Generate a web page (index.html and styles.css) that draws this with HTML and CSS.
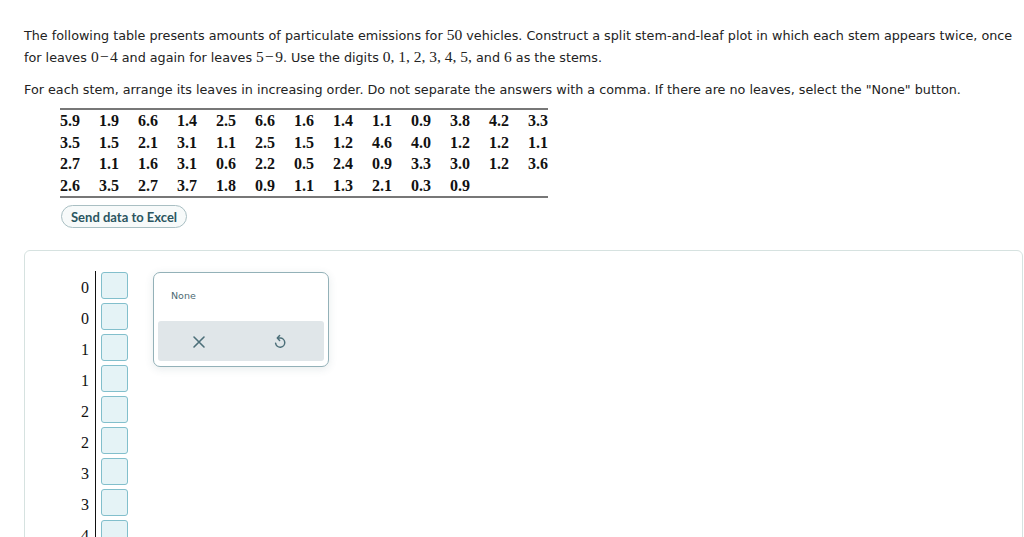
FILE: index.html
```html
<!DOCTYPE html>
<html>
<head>
<meta charset="utf-8">
<link rel="stylesheet" href="styles.css">
</head>
<body>
<div class="page">
  <p class="text">The following table presents amounts of particulate emissions for <span class="m">50</span> vehicles. Construct a split stem-and-leaf plot in which each stem appears twice, once for leaves <span class="m">0&#8202;&minus;&#8202;4</span> and again for leaves <span class="m">5&#8202;&minus;&#8202;9</span>. Use the digits <span class="m">0, 1, 2, 3, 4, 5,</span> and <span class="m">6</span> as the stems.</p>
  <p class="text second">For each stem, arrange its leaves in increasing order. Do not separate the answers with a comma. If there are no leaves, select the "None" button.</p>

  <table class="data">
    <tr><td>5.9</td><td>1.9</td><td>6.6</td><td>1.4</td><td>2.5</td><td>6.6</td><td>1.6</td><td>1.4</td><td>1.1</td><td>0.9</td><td>3.8</td><td>4.2</td><td>3.3</td></tr>
    <tr><td>3.5</td><td>1.5</td><td>2.1</td><td>3.1</td><td>1.1</td><td>2.5</td><td>1.5</td><td>1.2</td><td>4.6</td><td>4.0</td><td>1.2</td><td>1.2</td><td>1.1</td></tr>
    <tr><td>2.7</td><td>1.1</td><td>1.6</td><td>3.1</td><td>0.6</td><td>2.2</td><td>0.5</td><td>2.4</td><td>0.9</td><td>3.3</td><td>3.0</td><td>1.2</td><td>3.6</td></tr>
    <tr><td>2.6</td><td>3.5</td><td>2.7</td><td>3.7</td><td>1.8</td><td>0.9</td><td>1.1</td><td>1.3</td><td>2.1</td><td>0.3</td><td>0.9</td><td></td><td></td></tr>
  </table>

  <button class="excel">Send data to Excel</button>

  <div class="panel">
    <div class="plot">
      <div class="row"><span class="stem">0</span><span class="box"></span></div>
      <div class="row"><span class="stem">0</span><span class="box"></span></div>
      <div class="row"><span class="stem">1</span><span class="box"></span></div>
      <div class="row"><span class="stem">1</span><span class="box"></span></div>
      <div class="row"><span class="stem">2</span><span class="box"></span></div>
      <div class="row"><span class="stem">2</span><span class="box"></span></div>
      <div class="row"><span class="stem">3</span><span class="box"></span></div>
      <div class="row"><span class="stem">3</span><span class="box"></span></div>
      <div class="row"><span class="stem">4</span><span class="box"></span></div>
      <div class="row"><span class="stem">4</span><span class="box"></span></div>
      <div class="row"><span class="stem">5</span><span class="box"></span></div>
      <div class="row"><span class="stem">5</span><span class="box"></span></div>
      <div class="row"><span class="stem">6</span><span class="box"></span></div>
      <div class="row"><span class="stem">6</span><span class="box"></span></div>
    </div>
    <div class="popup">
      <div class="none">None</div>
      <div class="actions">
        <svg class="ico" width="14" height="14" viewBox="0 0 14 14"><path d="M2 2 L12 12 M12 2 L2 12" stroke="#4c6f79" stroke-width="1.6" fill="none" stroke-linecap="round"/></svg>
        <svg class="ico" width="14" height="16" viewBox="0 0 14 16"><path d="M4.6 4 H7 A4.6 4.6 0 1 1 2.6 9.2" stroke="#4c6f79" stroke-width="1.5" fill="none" stroke-linecap="round"/><path d="M6.6 1.6 L4.3 4 L6.6 6.4" stroke="#4c6f79" stroke-width="1.5" fill="none" stroke-linecap="round" stroke-linejoin="round"/></svg>
      </div>
    </div>
  </div>
</div>
</body>
</html>
```
FILE: styles.css
```css
* { box-sizing: border-box; }
html, body { margin: 0; padding: 0; background: #fff; }
body { font-family: "DejaVu Sans", Verdana, sans-serif; color: #222; }
.page { padding: 24px 0 0 24px; }
.text { margin: 0; font-size: 12.75px; line-height: 21px; padding-right: 4px; }
.text.second { margin-top: 11px; }
.m { font-family: "Liberation Serif", "Times New Roman", serif; font-size: 15.5px; }
.data {
  margin: 8px 0 0 36px;
  border-collapse: collapse;
  border-top: 2px solid #777;
  border-bottom: 2px solid #777;
  font-family: "Liberation Serif", "Times New Roman", serif;
  font-weight: bold;
  font-size: 16px;
  color: #111;
}
.data td { padding: 0 19px 0 0; height: 21.5px; line-height: 21.5px; white-space: nowrap; }
.data td:last-child { padding-right: 0; }
.excel {
  display: block;
  margin: 7px 0 0 37px;
  height: 23px;
  padding: 0 9px;
  border: 1px solid #a9bfc3;
  border-radius: 12px;
  background: #f7fafa;
  color: #2a5560;
  font-family: "Lato", "DejaVu Sans", sans-serif;
  font-weight: 700;
  font-size: 13px;
}
.panel {
  position: relative;
  margin-top: 22px;
  width: 999px;
  height: 600px;
  border: 1px solid #d6e2e0;
  border-radius: 6px;
  padding: 21px 0 0 0;
}
.plot { display: flex; flex-direction: column; gap: 4px; width: 104px; position: relative; }
.row { display: flex; align-items: center; height: 27px; }
.stem {
  width: 64px;
  text-align: right;
  font-family: "Liberation Serif", "Times New Roman", serif;
  font-size: 16px;
  color: #111;
  position: relative;
  top: 2px;
}
.box {
  margin-left: 12px;
  width: 27px;
  height: 27px;
  background: #e5f3f6;
  border: 1.5px solid #82bfcc;
  border-radius: 3px;
}
.plot::before {
  content: "";
  position: absolute;
  left: 70px;
  top: -1px;
  bottom: -4px;
  border-left: 1.5px solid #111;
}
.popup {
  position: absolute;
  left: 128px;
  top: 21px;
  width: 176px;
  height: 95px;
  background: #fff;
  border: 1px solid #93b1b8;
  border-radius: 7px;
  box-shadow: 0 2px 8px rgba(60, 90, 100, 0.12);
  padding: 0 4px;
}
.none {
  font-family: "DejaVu Sans", Verdana, sans-serif;
  font-size: 9.5px;
  color: #4d6b73;
  padding: 17px 0 0 13px;
  height: 48px;
}
.actions {
  height: 40px;
  background: #e0e6e9;
  border-radius: 3px;
  display: flex;
  align-items: center;
  justify-content: space-around;
  padding: 2px 4px 0 0;
}
.ico { display: block; }
```
